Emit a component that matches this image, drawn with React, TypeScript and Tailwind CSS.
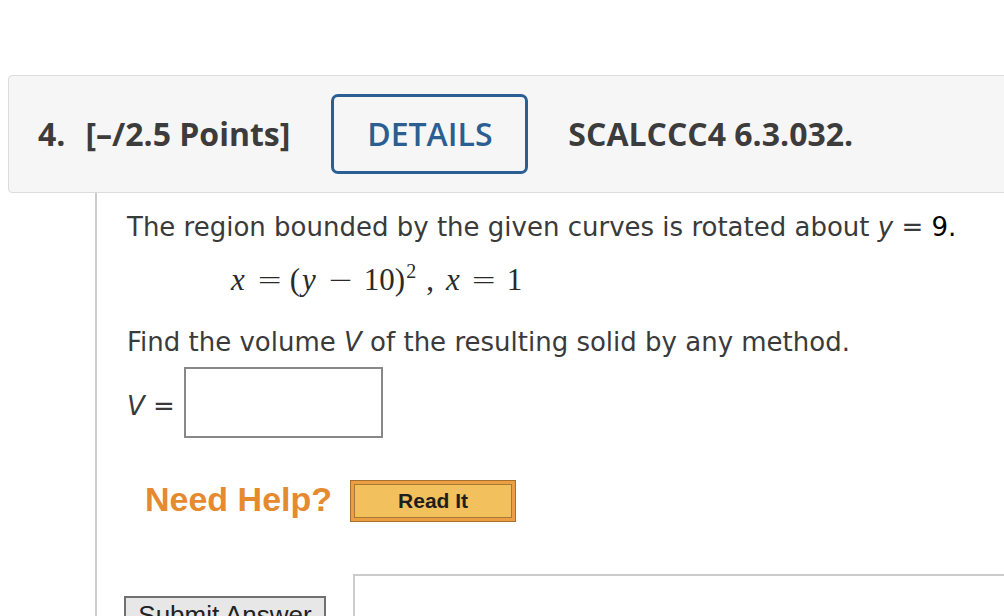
export default function App() {
  const serif = "inline-block font-['Liberation_Serif',serif]";
  const sym = "inline-block font-['DejaVu_Sans',sans-serif] font-light";
  return (
    <div className="w-[1004px] h-[616px] overflow-hidden bg-white relative">
      <div className="pt-[75px] pl-[8px]">
        <div className="w-[1060px] h-[118px] bg-[#f6f6f6] border border-[#dcdcdc] rounded-[4px] flex items-center pl-[29px] text-[#3c3c3c] font-['Open_Sans',sans-serif]">
          <span className="text-[32px] font-bold">4.</span>
          <span className="text-[32px] font-bold ml-[20px]">[–/2.5 Points]</span>
          <div className="ml-[41px] w-[197px] h-[80px] border-[3px] border-[#2a5f94] rounded-[7px] flex items-center justify-center">
            <span className="text-[32px] font-semibold text-[#2b5e91]">DETAILS</span>
          </div>
          <span className="text-[32px] font-bold ml-[40px]">SCALCCC4 6.3.032.</span>
        </div>
      </div>

      <div className="ml-[95px] border-l-2 border-[#cccccc] h-[500px] pl-[30px] pt-[16px] font-['DejaVu_Sans',Verdana,sans-serif] text-[#3a3a3a]">
        <p className="text-[26px] leading-[36px] whitespace-nowrap">
          The region bounded by the given curves is rotated about <i>y</i> = <span className="text-black">9.</span>
        </p>

        {/* equation */}
        <div className="h-[40px] leading-[40px] mt-[14px] text-[31px] text-[#2a2a2a] whitespace-nowrap">
          <span className={`${serif} italic ml-[104px]`}>x</span>
          <span className={`${sym} ml-[12px]`}>=</span>
          <span className={`${serif} ml-[7px]`}>(</span>
          <span className={`${serif} italic ml-[2px]`}>y</span>
          <span className={`${sym} ml-[12px]`}>−</span>
          <span className={`${serif} ml-[10px]`}>10</span>
          <span className={serif}>)</span>
          <span className={`${serif} text-[20px] ml-[1px] relative top-[-12px] leading-none`}>2</span>
          <span className={`${serif} ml-[10px]`}>,</span>
          <span className={`${serif} italic ml-[12px]`}>x</span>
          <span className={`${sym} ml-[11px]`}>=</span>
          <span className={`${serif} ml-[10px]`}>1</span>
        </div>

        <p className="text-[26px] leading-[36px] mt-[25px] whitespace-nowrap">
          Find the volume <i>V</i> of the resulting solid by any method.
        </p>

        <div className="flex items-center mt-[7px]">
          <span className="text-[26px] mt-[8px] whitespace-nowrap"><i>V</i> =</span>
          <div className="ml-[9px] w-[199px] h-[71px] border-2 border-[#888888] bg-white shrink-0"></div>
        </div>

        <div className="flex items-center mt-[38px] ml-[18px]">
          <span className="font-['Liberation_Sans',Arial,sans-serif] font-bold text-[34px] text-[#e58a2e] mt-[-2px] whitespace-nowrap">Need Help?</span>
          <div className="ml-[18px] w-[166px] h-[42px] border border-[#a8702f] bg-[#ec9e42] p-[3px] shrink-0">
            <div className="w-full h-full bg-[#f2c05c] border border-[#a57a38] flex items-center justify-center">
              <span className="font-['Liberation_Sans',Arial,sans-serif] font-bold text-[21px] text-[#1e1e1e]">Read It</span>
            </div>
          </div>
        </div>

        <div className="flex items-start mt-[49px]">
          <div className="ml-[-3px] mt-[22px] w-[202px] h-[40px] shrink-0 border-2 border-[#707070] bg-[#e7e7e7] flex justify-center pt-[2px] font-['Liberation_Sans',Arial,sans-serif] text-[26px] leading-[30px] text-[#222] whitespace-nowrap">
            Submit Answer
          </div>
          <div className="ml-[27px] w-[700px] h-[100px] shrink-0 border-2 border-[#cccccc]"></div>
        </div>
      </div>
    </div>
  );
}
